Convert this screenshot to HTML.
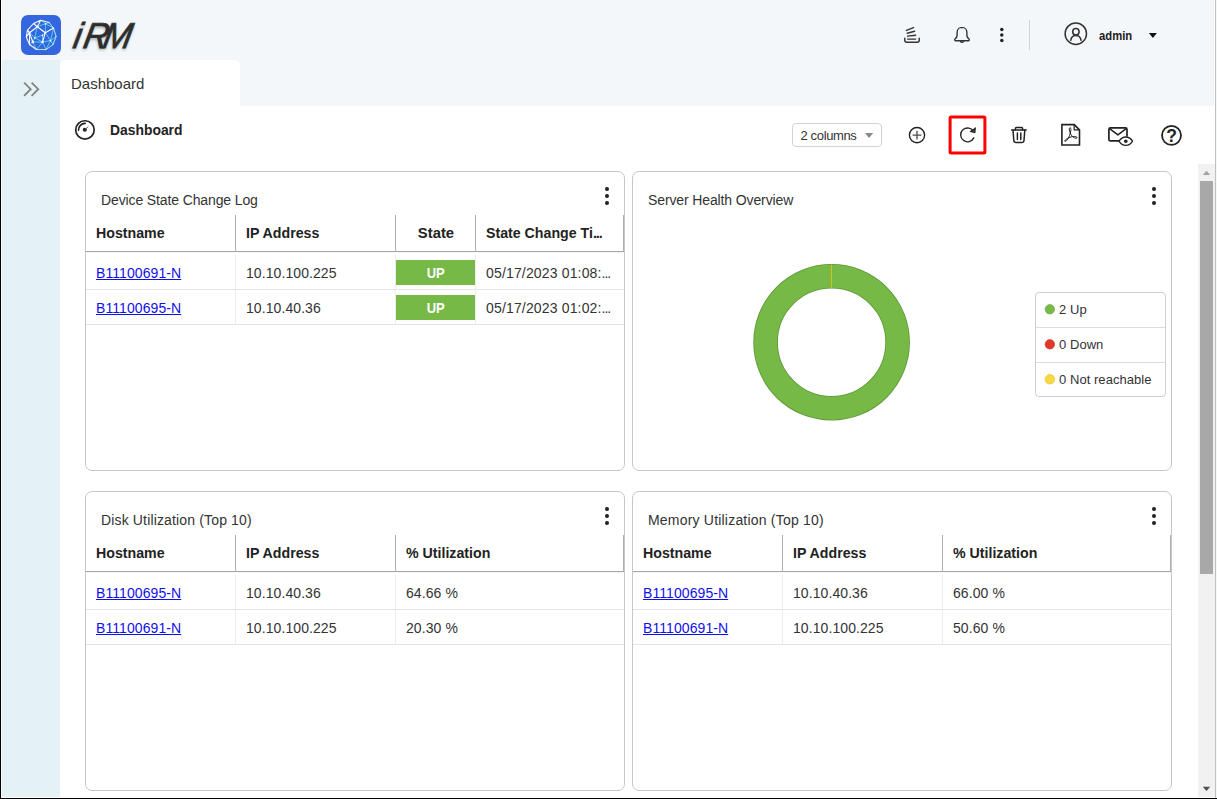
<!DOCTYPE html>
<html lang="en">
<head>
<meta charset="utf-8">
<title>iRM - Dashboard</title>
<style>
html,body{margin:0;padding:0;}
body{width:1217px;height:799px;overflow:hidden;background:#fff;position:relative;font-family:"Liberation Sans",sans-serif;color:#333;}
.abs{position:absolute;}
#hdr{left:2px;top:0;width:1212px;height:106px;background:#f3f7f9;}
#side{left:2px;top:60px;width:58px;height:737px;background:#e4f2f6;}
#tab{left:60px;top:60px;width:180px;height:46px;background:#fff;border-radius:5px 5px 0 0;}
#content{left:60px;top:106px;width:1155px;height:691px;background:#fff;}
#lb{left:0;top:0;width:1px;height:799px;background:#000;}
#bb{left:0;top:798px;width:1217px;height:1px;background:#000;}
#rb{left:1215px;top:0;width:1px;height:798px;background:#c0c0c0;}
#logo{left:21px;top:15px;width:40px;height:40px;border-radius:7px;background:#3466e0;}
#brand{left:70px;top:14px;font-size:36px;font-style:italic;line-height:44px;color:#2d2d2d;-webkit-text-stroke:0.75px #2d2d2d;text-shadow:0 2px 3px rgba(0,0,0,.3);letter-spacing:0;transform:skewX(-11deg) scaleX(.95);transform-origin:0 100%;}
#tabtxt{left:71px;top:74px;font-size:15px;line-height:20px;color:#333;}
#ttl{left:110px;top:120px;font-size:15px;font-weight:bold;line-height:20px;color:#222;transform:translateY(0.4px) scaleX(.925);transform-origin:0 50%;}
#admin{left:1099px;top:26px;font-size:12.5px;font-weight:bold;line-height:18px;color:#1c1c1c;transform:translateY(0.6px) scaleX(.9);transform-origin:0 50%;}
.panel{position:absolute;width:538px;height:298px;border:1px solid #c6c6c6;border-radius:7px;background:#fff;}
.ptitle{position:absolute;left:15px;top:19px;font-size:14px;letter-spacing:-0.12px;line-height:18px;color:#333;white-space:nowrap;}
.th{position:absolute;top:43px;height:36px;border-right:1px solid #b0b0b0;box-sizing:border-box;font-weight:bold;font-size:15.5px;line-height:36px;padding-left:10px;color:#222;white-space:nowrap;overflow:hidden;}
.hline{position:absolute;left:0;top:79px;width:538px;height:1px;background:#a8a8a8;}
.hline2{position:absolute;left:0;top:80px;width:538px;height:1px;background:#f3f3f3;}
.row{position:absolute;left:0;width:538px;height:35px;border-bottom:1px solid #e4e4e4;box-sizing:border-box;}
.td{position:absolute;top:0;height:34px;border-right:1px solid #ececec;box-sizing:border-box;font-size:14px;letter-spacing:0.08px;line-height:36px;padding-left:10px;color:#333;white-space:nowrap;overflow:hidden;}
.td a{color:#1010ea;text-decoration:underline;}
.up{position:absolute;left:310px;top:5px;width:79px;height:25px;background:#76b947;color:#fff;font-weight:bold;font-size:14px;line-height:27px;text-align:center;}
.keb{position:absolute;left:519px;top:14px;width:6px;height:20px;}
.keb i{position:absolute;left:0.1px;width:3.8px;height:3.8px;border-radius:50%;background:#222;}
.lg{position:absolute;left:0;width:129px;height:35px;box-sizing:border-box;border-bottom:1px solid #ddd;font-size:13px;line-height:34px;padding-left:23px;letter-spacing:0.05px;color:#333;white-space:nowrap;}
.lg i{position:absolute;left:9px;top:11.5px;width:9px;height:9px;border-radius:50%;border:0.5px solid #999;}
.sx{display:inline-block;transform:translateY(.3px) scaleX(.915);transform-origin:0 50%;white-space:nowrap;}
.sxc{display:inline-block;transform:translateY(.3px) scaleX(.915);transform-origin:50% 50%;white-space:nowrap;}
.el{letter-spacing:-1.1px;}
.dt{letter-spacing:0.16px;}
</style>
</head>
<body>
<div id="hdr" class="abs"></div>
<div id="side" class="abs"></div>
<div id="tab" class="abs"></div>
<div id="content" class="abs"></div>

<div id="logo" class="abs"></div>
<svg class="abs" style="left:21px;top:15px" width="40" height="40" viewBox="21 15 40 40" fill="none" stroke-linecap="round">
  <path d="M37.27 26.76L34.77 37.78M45.53 23.76L45.28 32.77M45.53 23.76L40.77 20.26M45.53 23.76L49.04 22.51M45.53 23.76L53.54 28.02M37.27 26.76L45.53 23.76M29.51 32.77L34.77 37.78M34.77 37.78L42.53 35.28M42.53 35.28L45.28 32.77M34.77 37.78L42.53 42.03M34.77 37.78L32.76 42.03M32.76 42.03L42.53 42.03M32.76 42.03L36.52 49.54M42.53 42.03L36.52 49.54M42.53 42.03L46.03 49.54M42.53 42.03L50.54 40.53M50.54 40.53L53.54 28.02M50.54 40.53L56.04 36.53M50.54 40.53L53.04 44.54M50.54 40.53L46.03 49.54M45.28 32.77L50.54 40.53M32.76 42.03L29.51 44.54M42.53 35.28L42.53 42.03M49.04 22.51L53.54 28.02M53.54 28.02L56.04 36.53M56.04 36.53L53.04 44.54M53.04 44.54L46.03 49.54M46.03 49.54L36.52 49.54" stroke="#62e2e8" stroke-width="0.85" opacity=".95"/>
  <path d="M49.04 22.51L53.54 28.02M53.54 28.02L56.04 36.53M56.04 36.53L53.04 44.54M53.04 44.54L46.03 49.54M46.03 49.54L36.52 49.54" stroke="#e8f6ff" stroke-width="0.6" opacity=".85"/>
  <path d="M40.77 20.26L49.04 22.51M36.52 49.54L29.51 44.54M29.51 44.54L26.26 37.03M26.26 37.03L27.51 30.02M27.51 30.02L33.52 23.51M33.52 23.51L40.77 20.26M33.52 23.51L37.27 26.76M40.77 20.26L37.27 26.76M37.27 26.76L29.51 32.77M37.27 26.76L45.28 32.77M45.28 32.77L53.54 28.02M27.51 30.02L29.51 32.77M29.51 32.77L26.26 37.03M29.51 32.77L32.76 42.03M45.28 32.77L42.53 42.03M29.51 32.77L29.51 44.54" stroke="#ffffff" stroke-width="1.05"/>
  <path d="M41.5 49.5h4.5" stroke="#e8d66a" stroke-width="0.7"/>
  <g fill="#fff" stroke="none"><circle cx="37.27" cy="26.76" r="1.3"/><circle cx="29.51" cy="32.77" r="1.1"/><circle cx="45.28" cy="32.77" r="1.0"/><circle cx="32.76" cy="42.03" r="1.2"/><circle cx="42.53" cy="42.03" r="1.2"/><circle cx="50.54" cy="40.53" r="0.9"/><circle cx="34.77" cy="37.78" r="0.9"/><circle cx="42.53" cy="35.28" r="0.8"/><circle cx="45.53" cy="23.76" r="0.8"/></g>
</svg>
<div id="brand" class="abs"><span style="letter-spacing:2.5px">i</span><span style="letter-spacing:-5.5px">R</span>M</div>
<div id="tabtxt" class="abs">Dashboard</div>
<div id="ttl" class="abs">Dashboard</div>
<div id="admin" class="abs">admin</div>


<!-- HEADER ICONS -->
<svg class="abs" style="left:900px;top:22px" width="24" height="24" viewBox="900 22 24 24" fill="none" stroke="#333" stroke-width="1.450" stroke-linecap="round" stroke-linejoin="round">
  <path d="M904.800 38.300v2a2 2 0 0 0 2 2h10.400a2 2 0 0 0 2-2v-2"/>
  <path d="M907.600 39.100h8M907.600 36.100l8-.8M907.300 33.200l7.300-1.900M906.400 30.400l7.200-2.800"/>
</svg>
<svg class="abs" style="left:950px;top:22px" width="24" height="24" viewBox="950 22 24 24" fill="none" stroke="#333" stroke-width="1.400" stroke-linecap="round" stroke-linejoin="round">
  <path d="M962 27.400c-2.900 0-4.900 2.200-4.900 5.100v3c0 1.400-.7 2.300-1.900 3.200-.8.600-.5 2.100.6 2.100h12.400c1.100 0 1.400-1.500.6-2.100-1.200-.9-1.900-1.800-1.900-3.200v-3c0-2.900-2-5.100-4.900-5.100z"/>
  <path d="M960.500 41.300a1.600 1.600 0 0 0 3 0"/>
</svg>
<svg class="abs" style="left:996px;top:24px" width="12" height="22" viewBox="996 24 12 22">
  <circle cx="1001.8" cy="29.6" r="1.75" fill="#222"/><circle cx="1001.8" cy="35.1" r="1.75" fill="#222"/><circle cx="1001.8" cy="40.5" r="1.75" fill="#222"/>
</svg>
<div class="abs" style="left:1029px;top:20px;width:1px;height:30px;background:#cfd3d5;"></div>
<svg class="abs" style="left:1062px;top:20px" width="28" height="28" viewBox="1062 20 28 28" fill="none" stroke="#333" stroke-width="1.5" stroke-linecap="round" stroke-linejoin="round">
  <circle cx="1075.800" cy="33.700" r="10.700"/>
  <circle cx="1075.900" cy="31.800" r="3.200"/>
  <path d="M1070.700 40.300c.5-3 2.500-4.900 5.200-4.900s4.700 1.900 5.200 4.900"/>
</svg>
<svg class="abs" style="left:1146px;top:30px" width="14" height="10" viewBox="1146 30 14 10"><path d="M1148.900 33h8l-4 5.100z" fill="#111"/></svg>

<!-- SIDEBAR CHEVRON -->
<svg class="abs" style="left:20px;top:78px" width="24" height="22" viewBox="20 78 24 22" fill="none" stroke="#848484" stroke-width="1.900" stroke-linecap="butt" stroke-linejoin="miter">
  <path d="M24.100 82.600l6.600 6.600-6.600 6.600M31.600 82.600l6.600 6.600-6.600 6.600"/>
</svg>

<!-- TITLE ICON -->
<svg class="abs" style="left:72px;top:117px" width="26" height="26" viewBox="72 117 26 26" fill="none" stroke="#222" stroke-linecap="round">
  <circle cx="84.950" cy="129.950" r="9.200" stroke-width="1.700"/>
  <path d="M78.500 130.200a6.500 6.500 0 0 1 6.700-6.800" stroke-width="1.600"/>
  <circle cx="84.800" cy="129.800" r="2.050" fill="#222" stroke="none"/>
  <path d="M85.500 129.100l2.500-2.200" stroke-width="0.900" stroke="#555"/>
</svg>

<!-- TOOLBAR -->
<div class="abs" style="left:792px;top:123px;width:88px;height:22px;border:1px solid #d2d2d2;border-radius:4px;background:#fff;"></div>
<div class="abs" style="left:800.5px;top:126px;font-size:13px;letter-spacing:-0.36px;line-height:18px;color:#333;white-space:nowrap;transform:translateY(0.5px);">2 columns</div>
<svg class="abs" style="left:862px;top:130px" width="14" height="10" viewBox="862 130 14 10"><path d="M865 133h8.200l-4.100 5z" fill="#8a8a8a"/></svg>

<svg class="abs" style="left:905px;top:123px" width="24" height="24" viewBox="905 123 24 24" fill="none" stroke="#222" stroke-width="1.400" stroke-linecap="butt">
  <circle cx="917" cy="135.100" r="7.600"/>
  <path d="M917 130.700v8.800M912.600 135.100h8.800" stroke="#4a4a4a" stroke-width="1.300"/>
</svg>
<svg class="abs" style="left:945px;top:112px" width="46" height="46" viewBox="945 112 46 46"><rect x="950.100" y="117.100" width="34.800" height="35.800" rx="1" fill="none" stroke="#fe0000" stroke-width="3"/></svg>
<svg class="abs" style="left:956px;top:123px" width="24" height="24" viewBox="956 123 24 24" fill="none" stroke="#222" stroke-width="1.500" stroke-linecap="round" stroke-linejoin="round">
  <path d="M973.700 131.700a6.900 6.900 0 1 0 .1 6.200" stroke-width="1.350"/>
  <path d="M975.300 128.200l-.4 4.300-4.300-1z" stroke-width="1.100" fill="#444" stroke-linejoin="miter"/>
</svg>
<svg class="abs" style="left:1007px;top:123px" width="24" height="24" viewBox="1007 123 24 24" fill="none" stroke="#222" stroke-width="1.500" stroke-linecap="round" stroke-linejoin="round">
  <path d="M1011.600 129.900h14.600"/>
  <path d="M1015.400 129.700v-1.300a1 1 0 0 1 1-1h5.200a1 1 0 0 1 1 1v1.300"/>
  <path d="M1013 130.200l.8 10.300a2.300 2.300 0 0 0 2.300 2.100h5.600a2.300 2.300 0 0 0 2.300-2.100l.8-10.300"/>
  <path d="M1017.400 133v6.600M1020.800 133v6.600"/>
</svg>
<svg class="abs" style="left:1058px;top:121px" width="26" height="28" viewBox="1058 121 26 28" fill="none" stroke="#222" stroke-width="1.600" stroke-linejoin="miter">
  <path d="M1061.900 124.600h12.300l5.300 5.300v15.100h-17.600z"/>
  <path d="M1074.200 124.600v5.300h5.300" stroke-width="1.200"/>
  <path d="M1070 127.600c-1.200.3-.8 3.500.6 6.300 1.400 2.900 4.600 5 6.300 4.200 1-.6-.7-1.900-4.300-1.500-3.400.4-7.200 2.500-7.800 4.200-.3 1 1.100.8 2.500-1 1.600-2.100 3.200-6.400 3.500-9.200.2-1.800-.2-3.200-.8-3z" stroke-width="1" stroke-linejoin="round"/>
</svg>
<svg class="abs" style="left:1105px;top:123px" width="32" height="26" viewBox="1105 123 32 26" fill="none" stroke="#222" stroke-width="1.500" stroke-linecap="round" stroke-linejoin="round">
  <path d="M1118.500 140.900h-8.100a1.500 1.500 0 0 1-1.500-1.500v-10a1.500 1.500 0 0 1 1.500-1.500h15.100a1.500 1.500 0 0 1 1.500 1.500v6.500" stroke-width="1.700"/>
  <path d="M1109.600 128.600l8.300 6.300 8.300-6.300"/>
  <path d="M1119 141.200c1.700-2.700 4-4.200 6.800-4.200s5.100 1.500 6.800 4.200c-1.700 2.700-4 4.200-6.800 4.200s-5.100-1.500-6.800-4.200z" fill="#fff" stroke-width="1.300"/>
  <circle cx="1125.800" cy="141.200" r="1.800" fill="#222" stroke="none"/>
</svg>
<svg class="abs" style="left:1158px;top:122px" width="28" height="28" viewBox="1158 122 28 28">
  <circle cx="1171.500" cy="135.350" r="9.500" fill="none" stroke="#222" stroke-width="1.800"/>
  <text x="1171.700" y="141.900" text-anchor="middle" font-family="Liberation Sans, sans-serif" font-weight="bold" font-size="17.500" fill="#222">?</text>
</svg>

<!-- PANELS -->
<div class="panel" style="left:85px;top:171px;" id="p1">
  <div class="ptitle">Device State Change Log</div>
  <div class="keb"><i style="top:1.1px"></i><i style="top:8px"></i><i style="top:14.9px"></i></div>
  <div class="th" style="left:0;width:150px;"><span class="sx">Hostname</span></div>
  <div class="th" style="left:150px;width:160px;"><span class="sx">IP Address</span></div>
  <div class="th" style="left:310px;width:80px;padding-left:0;text-align:center;"><span class="sxc" style="transform:translateY(.3px) scaleX(.955)">State</span></div>
  <div class="th" style="left:390px;width:148px;"><span class="sx">State Change Ti<span class="el">...</span></span></div>
  <div class="hline"></div><div class="hline2"></div>
  <div class="row" style="top:83px;">
    <div class="td" style="left:0;width:150px;"><a>B11100691-N</a></div>
    <div class="td" style="left:150px;width:160px;">10.10.100.225</div>
    <div class="td" style="left:310px;width:80px;"></div>
    <div class="up"><span class="sxc" style="transform:scaleX(.93)">UP</span></div>
    <div class="td" style="left:390px;width:148px;border-right:none;"><span class="dt">05/17/2023 01:08:</span><span class="el">...</span></div>
  </div>
  <div class="row" style="top:118px;">
    <div class="td" style="left:0;width:150px;"><a>B11100695-N</a></div>
    <div class="td" style="left:150px;width:160px;">10.10.40.36</div>
    <div class="td" style="left:310px;width:80px;"></div>
    <div class="up"><span class="sxc" style="transform:scaleX(.93)">UP</span></div>
    <div class="td" style="left:390px;width:148px;border-right:none;"><span class="dt">05/17/2023 01:02:</span><span class="el">...</span></div>
  </div>
</div>

<div class="panel" style="left:632px;top:171px;" id="p2">
  <div class="ptitle">Server Health Overview</div>
  <svg class="abs" style="left:109px;top:81px" width="180" height="180" viewBox="742 253 180 180">
    <circle cx="831.600" cy="342.300" r="66" fill="none" stroke="#5c9634" stroke-width="24.600"/>
    <circle cx="831.600" cy="342.300" r="66" fill="none" stroke="#76b947" stroke-width="23"/>
    <path d="M831.500 264.600v23.600" stroke="#e0c21c" stroke-width="0.900"/>
  </svg>
  <div class="abs" style="left:402px;top:120px;width:129px;height:103px;border:1px solid #cfcfcf;border-radius:4px;background:#fff;">
    <div class="lg" style="top:0"><svg class="abs" style="left:7px;top:9px" width="14" height="14" viewBox="0 0 14 14"><circle cx="6.850" cy="7.300" r="4.750" fill="#76b947" stroke="#68a83c" stroke-width="0.600"/></svg>2 Up</div>
    <div class="lg" style="top:35px"><svg class="abs" style="left:7px;top:9px" width="14" height="14" viewBox="0 0 14 14"><circle cx="6.850" cy="7.300" r="4.750" fill="#e2372b" stroke="#c93126" stroke-width="0.600"/></svg>0 Down</div>
    <div class="lg" style="top:70px;border-bottom:none"><svg class="abs" style="left:7px;top:9px" width="14" height="14" viewBox="0 0 14 14"><circle cx="6.850" cy="7.300" r="4.750" fill="#f9d93e" stroke="#dcbc2e" stroke-width="0.600"/></svg>0 Not reachable</div>
  </div>

  <div class="keb"><i style="top:1.1px"></i><i style="top:8px"></i><i style="top:14.9px"></i></div>
</div>

<div class="panel" style="left:85px;top:491px;" id="p3">
  <div class="ptitle" style="letter-spacing:0.15px">Disk Utilization (Top 10)</div>
  <div class="keb"><i style="top:1.1px"></i><i style="top:8px"></i><i style="top:14.9px"></i></div>
  <div class="th" style="left:0;width:150px;"><span class="sx">Hostname</span></div>
  <div class="th" style="left:150px;width:160px;"><span class="sx">IP Address</span></div>
  <div class="th" style="left:310px;width:228px;"><span class="sx">% Utilization</span></div>
  <div class="hline"></div><div class="hline2"></div>
  <div class="row" style="top:83px;">
    <div class="td" style="left:0;width:150px;"><a>B11100695-N</a></div>
    <div class="td" style="left:150px;width:160px;">10.10.40.36</div>
    <div class="td" style="left:310px;width:228px;border-right:none;">64.66 %</div>
  </div>
  <div class="row" style="top:118px;">
    <div class="td" style="left:0;width:150px;"><a>B11100691-N</a></div>
    <div class="td" style="left:150px;width:160px;">10.10.100.225</div>
    <div class="td" style="left:310px;width:228px;border-right:none;">20.30 %</div>
  </div>
</div>

<div class="panel" style="left:632px;top:491px;" id="p4">
  <div class="ptitle" style="letter-spacing:0.2px">Memory Utilization (Top 10)</div>
  <div class="keb"><i style="top:1.1px"></i><i style="top:8px"></i><i style="top:14.9px"></i></div>
  <div class="th" style="left:0;width:150px;"><span class="sx">Hostname</span></div>
  <div class="th" style="left:150px;width:160px;"><span class="sx">IP Address</span></div>
  <div class="th" style="left:310px;width:228px;"><span class="sx">% Utilization</span></div>
  <div class="hline"></div><div class="hline2"></div>
  <div class="row" style="top:83px;">
    <div class="td" style="left:0;width:150px;"><a>B11100695-N</a></div>
    <div class="td" style="left:150px;width:160px;">10.10.40.36</div>
    <div class="td" style="left:310px;width:228px;border-right:none;">66.00 %</div>
  </div>
  <div class="row" style="top:118px;">
    <div class="td" style="left:0;width:150px;"><a>B11100691-N</a></div>
    <div class="td" style="left:150px;width:160px;">10.10.100.225</div>
    <div class="td" style="left:310px;width:228px;border-right:none;">50.60 %</div>
  </div>
</div>

<!-- SCROLLBAR -->
<div class="abs" style="left:1198px;top:164px;width:17px;height:633px;background:#f1f1f1;"></div>
<div class="abs" style="left:1200px;top:181px;width:13px;height:393px;background:#a8a8a8;"></div>

<svg class="abs" style="left:1198px;top:164px" width="17" height="17" viewBox="1198 164 17 17"><path d="M1202.800 175h7.400l-3.700-4.200z" fill="#a3a3a3"/></svg>
<svg class="abs" style="left:1198px;top:780px" width="17" height="17" viewBox="1198 780 17 17"><path d="M1202.800 786.800h7.400l-3.700 4.300z" fill="#505050"/></svg>
<div id="lb" class="abs"></div>
<div class="abs" style="left:1216px;top:0;width:1px;height:798px;background:#f6f8f8;"></div>
<div id="rb" class="abs"></div>
<div id="bb" class="abs"></div>
</body>
</html>
